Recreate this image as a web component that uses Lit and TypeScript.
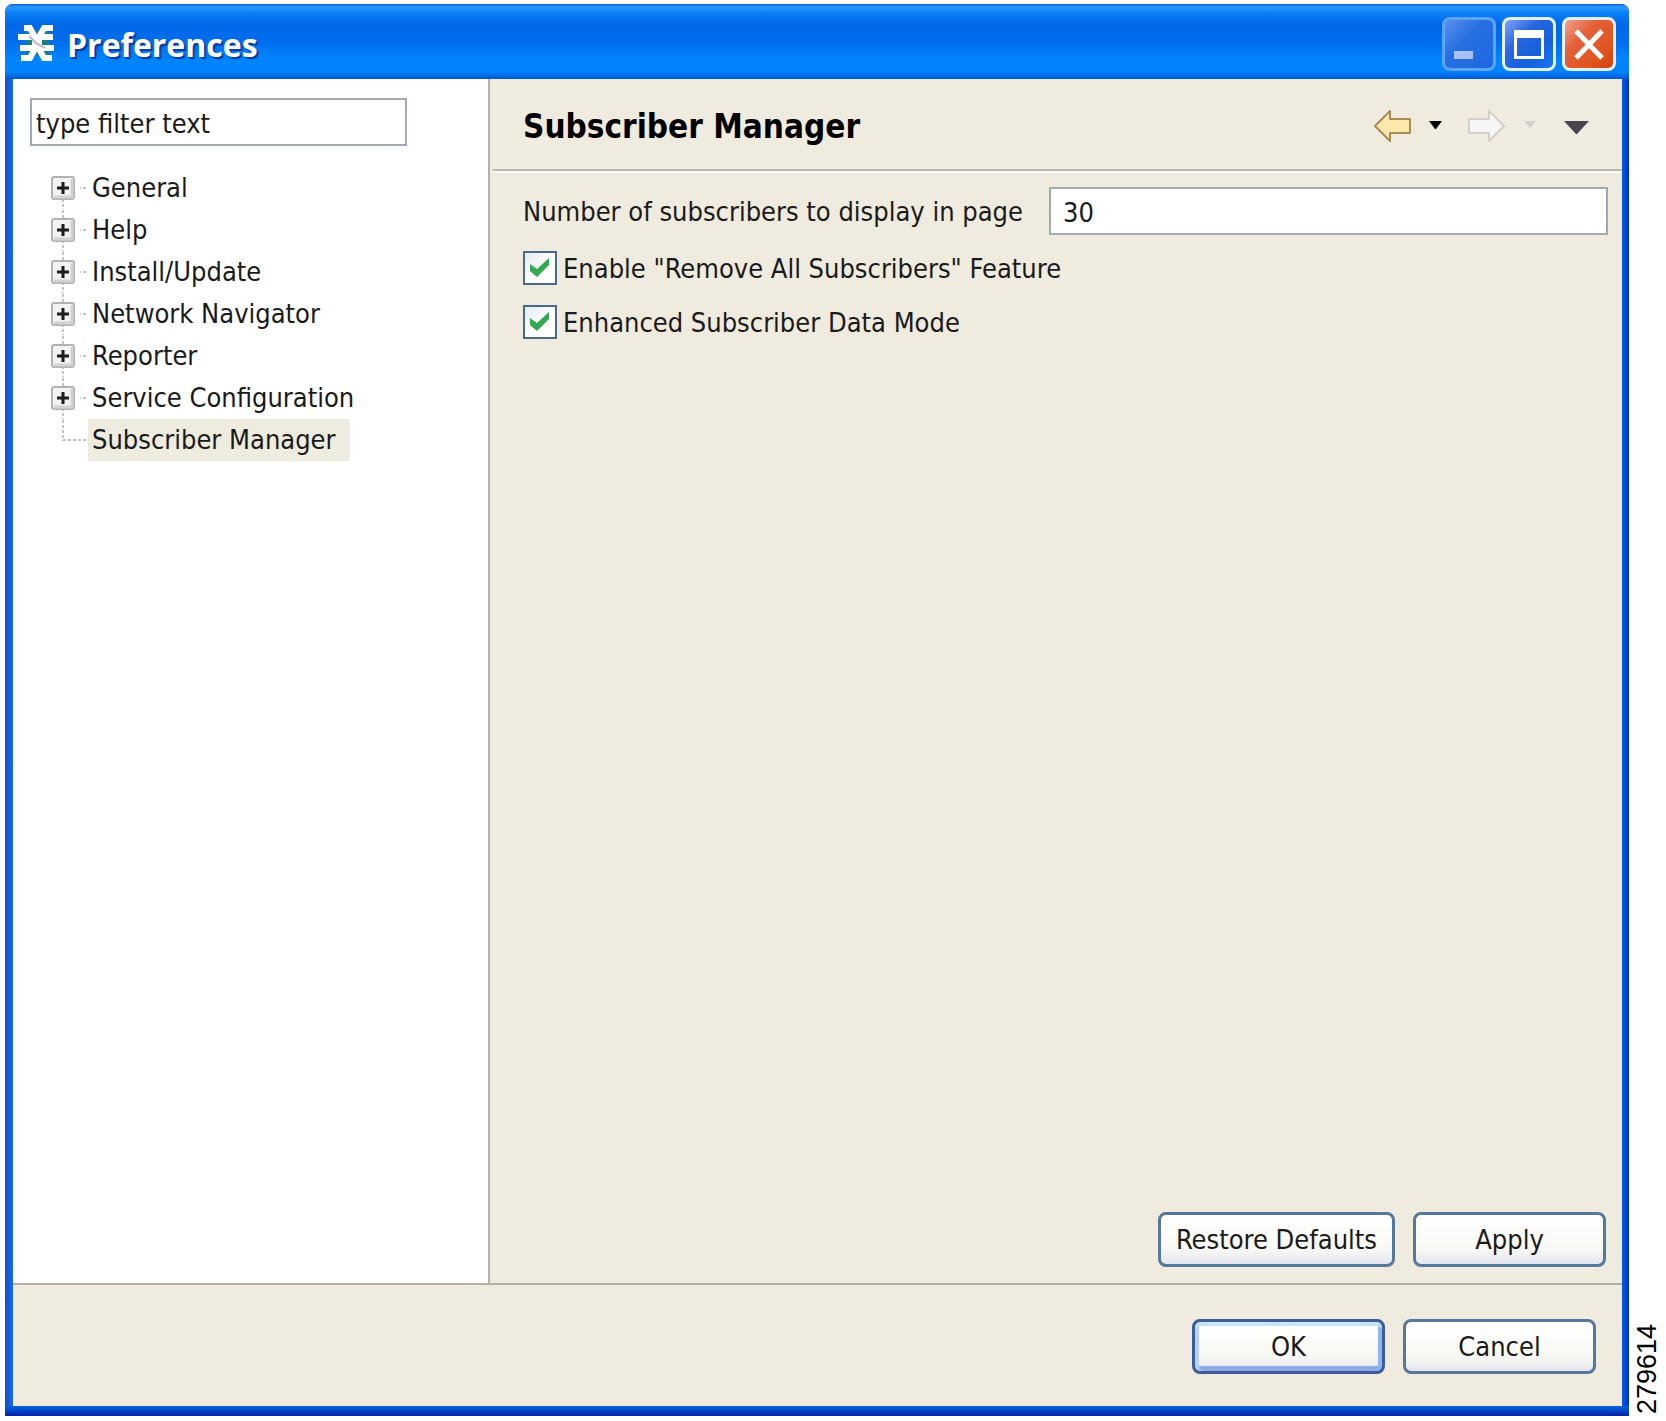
import { LitElement, html, css, svg, nothing } from "lit";
import { customElement, property, state } from "lit/decorators.js";
import { classMap } from "lit/directives/class-map.js";

interface TreeEntry {
  label: string;
  expandable: boolean;
}

const ENTRIES: TreeEntry[] = [
  { label: "General", expandable: true },
  { label: "Help", expandable: true },
  { label: "Install/Update", expandable: true },
  { label: "Network Navigator", expandable: true },
  { label: "Reporter", expandable: true },
  { label: "Service Configuration", expandable: true },
  { label: "Subscriber Manager", expandable: false },
];

const controlReset = css`
  * {
    box-sizing: border-box;
  }
  button,
  input {
    font: inherit;
    color: inherit;
    margin: 0;
  }
  svg {
    display: block;
  }
`;

@customElement("title-bar")
export class TitleBar extends LitElement {
  static styles = [
    controlReset,
    css`
      :host {
        display: flex;
        box-sizing: border-box;
        align-items: center;
        height: 75px;
        padding: 4px 13px 0;
        border-radius: 8px 8px 0 0;
        background: linear-gradient(
          #0a5fd8 0,
          #2a9bff 3px,
          #0a80f8 9px,
          #0068e8 20px,
          #006cec 36px,
          #0084ff 56px,
          #0082fc 68px,
          #0058d4 75px
        );
        color: #fff;
      }
      .name {
        flex: 1;
        margin: 0 0 0 12px;
        padding-top: 2px;
        font: bold 32px/40px "Open Sans", "Noto Sans", sans-serif;
        text-shadow: 2px 2px 1px #0a3a9c;
      }
      .buttons {
        display: flex;
        gap: 6px;
      }
      .box {
        width: 54px;
        height: 54px;
        padding: 0;
        display: grid;
        place-items: center;
        border: 3px solid #e4f0ff;
        border-radius: 8px;
        background: linear-gradient(135deg, #7ea6f4 0, #2a66e0 35%, #1460dc 70%, #1c78f4 100%);
      }
      .minimize {
        border-color: #5ca4f8;
        background: linear-gradient(135deg, #5c90ee 0, #2870e0 40%, #1c68e4 100%);
      }
      .close {
        background: linear-gradient(135deg, #f0a48c 0, #e4603a 35%, #e0541c 75%, #cc4410 100%);
      }
    `,
  ];

  render() {
    return html`
      <svg width="37" height="37" viewBox="0 0 37 37" fill="none" aria-hidden="true">
        <path d="M7 6H31V31H7Z" fill="#1c7c8c" />
        <path
          d="M6 3H12L17 12V24L12 33H3M35 3H26L21 12V24L26 33H34M0 12H17M2 23H17M21 12H35M21 23H36"
          stroke="#fff"
          stroke-width="6"
        />
        <path d="M11 11L18 18L27 23" stroke="#b8b4b8" stroke-width="2" />
      </svg>
      <h1 class="name">Preferences</h1>
      <div class="buttons">
        <button class="box minimize" type="button" aria-label="Minimize">
          <svg width="48" height="48" viewBox="0 0 48 48"><path d="M9 31h19v8H9z" fill="#a8c0f4" /></svg>
        </button>
        <button class="box maximize" type="button" aria-label="Maximize">
          <svg width="48" height="48" viewBox="0 0 48 48">
            <path d="M9 10h30v29H9zM12 18v18h24V18z" fill="#fff" fill-rule="evenodd" />
          </svg>
        </button>
        <button class="box close" type="button" aria-label="Close">
          <svg width="48" height="48" viewBox="0 0 48 48">
            <path d="M11 11L37 38M37 11L11 38" stroke="#fff" stroke-width="5" />
          </svg>
        </button>
      </div>
    `;
  }
}

@customElement("preference-tree")
export class PreferenceTree extends LitElement {
  @property() selected = "";

  static styles = [
    controlReset,
    css`
      :host {
        display: block;
        padding: 19px 17px;
        background: #fff;
        border-right: 2px solid #b4b2aa;
      }
      .filter {
        display: block;
        width: 377px;
        max-width: 100%;
        height: 48px;
        padding: 2px 4px 0;
        border: 2px solid #a3a9b1;
        background: #fff;
        outline: none;
      }
      .tree {
        list-style: none;
        margin: 21px 0 0;
        padding: 0 0 0 21px;
      }
      .row {
        display: flex;
        align-items: center;
        height: 42px;
      }
      .item {
        height: 42px;
        padding: 0 14px 0 4px;
        border: 0;
        background: none;
        white-space: nowrap;
        line-height: 42px;
      }
      .picked {
        background: #eeecdf;
      }
    `,
  ];

  private branch(entry: TreeEntry, first: boolean) {
    return html`<svg width="37" height="42" viewBox="0 0 37 42" fill="none" aria-hidden="true">
      <path
        d="${first ? "M12 22" : "M12 1"}V${entry.expandable ? 42 : 22}"
        stroke="#c4c4c4"
        stroke-width="2"
        stroke-dasharray="3 2"
      />
      <path d="M12 21H35" stroke="#c4c4c4" stroke-width="2" stroke-dasharray="3 2" />
      ${entry.expandable
        ? svg`<path d="M24 10H29V32H24Z" fill="#fff" />
            <rect x="1" y="10" width="22" height="22" rx="2" fill="#f3f3f1" stroke="#b0b3b5" stroke-width="2" />
            <path d="M3 30H21V12" stroke="#d2d3d1" stroke-width="3" />
            <path d="M6 21H18M12 15V27" stroke="#1c1c1c" stroke-width="3" />`
        : nothing}
    </svg>`;
  }

  private pick(label: string) {
    this.dispatchEvent(new CustomEvent("pick", { detail: label }));
  }

  render() {
    return html`
      <input class="filter" type="text" aria-label="Filter" value="type filter text" />
      <ul class="tree">
        ${ENTRIES.map(
          (entry, index) => html`<li class="row">
            ${this.branch(entry, index === 0)}
            <button
              type="button"
              class=${classMap({ item: true, picked: entry.label === this.selected })}
              @click=${() => this.pick(entry.label)}
            >
              ${entry.label}
            </button>
          </li>`,
        )}
      </ul>
    `;
  }
}

@customElement("preference-page")
export class PreferencePage extends LitElement {
  @property() heading = "";

  static styles = [
    controlReset,
    css`
      :host {
        display: flex;
        flex-direction: column;
        min-width: 0;
      }
      .head {
        display: flex;
        align-items: center;
        height: 92px;
        margin-left: 3px;
        padding: 4px 32px 0 30px;
        border-bottom: 2px solid #b9b7a9;
        box-shadow: 0 2px 0 #fbfaf4;
      }
      .title {
        flex: 1;
        margin: 0;
        padding-top: 2px;
        font: bold 33px/40px "DejaVu Sans Condensed", "DejaVu Sans", sans-serif;
        color: #000;
      }
      .nav {
        display: flex;
        align-items: center;
      }
      .tool {
        padding: 0;
        border: 0;
        background: none;
      }
      .form {
        flex: 1;
        display: flex;
        flex-direction: column;
        align-items: stretch;
        padding: 16px 14px 0 33px;
      }
      .field {
        display: flex;
        align-items: center;
        gap: 26px;
        margin-bottom: 16px;
      }
      .caption {
        padding-top: 2px;
      }
      .count {
        flex: 1;
        min-width: 0;
        height: 48px;
        padding: 2px 12px 0;
        border: 2px solid #a3a9b1;
        background: #fff;
        outline: none;
      }
      .option {
        display: flex;
        align-items: center;
        gap: 6px;
        height: 34px;
        margin-bottom: 20px;
      }
      .check {
        position: relative;
        display: grid;
        width: 34px;
        height: 34px;
      }
      .tick {
        appearance: none;
        width: 34px;
        height: 34px;
        border: 2px solid #4a6a8c;
        background: linear-gradient(135deg, #e6ebee, #fff 60%);
      }
      .mark {
        position: absolute;
        inset: 0;
        pointer-events: none;
      }
      .tick:not(:checked) + .mark {
        display: none;
      }
      .actions {
        display: flex;
        justify-content: flex-end;
        gap: 18px;
        padding: 0 16px 16px;
      }
    `,
  ];

  private option(id: string, label: string) {
    return html`<div class="option">
      <span class="check">
        <input class="tick" type="checkbox" id=${id} checked />
        <svg class="mark" width="34" height="34" viewBox="0 0 34 34" aria-hidden="true">
          <path d="M7 13L14 18L26 7V14L14 26L7 20Z" fill="#34a853" />
        </svg>
      </span>
      <label class="caption" for=${id}>${label}</label>
    </div>`;
  }

  render() {
    return html`
      <header class="head">
        <h2 class="title">${this.heading}</h2>
        <div class="nav">
          <button class="tool" type="button" aria-label="Back">
            <svg width="54" height="34" viewBox="0 0 54 34">
              <path
                d="M1 17L16 2V10H36V24H16V32Z"
                fill="#ffe8ac"
                stroke="#a88c58"
                stroke-width="2"
                stroke-linejoin="round"
              />
            </svg>
          </button>
          <button class="tool" type="button" aria-label="Back history">
            <svg width="40" height="34" viewBox="0 0 40 34"><path d="M1 12H14L8 20H7Z" fill="#000" /></svg>
          </button>
          <button class="tool" type="button" aria-label="Forward">
            <svg width="54" height="34" viewBox="0 0 54 34">
              <path
                d="M36 17L21 2V10H1V24H21V32Z"
                fill="#f7f6f4"
                stroke="#d2d0ca"
                stroke-width="2"
                stroke-linejoin="round"
              />
            </svg>
          </button>
          <button class="tool" type="button" aria-label="Forward history">
            <svg width="41" height="34" viewBox="0 0 41 34"><path d="M2 12H14L8 19Z" fill="#d4d2c8" /></svg>
          </button>
          <button class="tool" type="button" aria-label="Menu">
            <svg width="27" height="34" viewBox="0 0 27 34"><path d="M1 12H26L14 25H13Z" fill="#48444f" /></svg>
          </button>
        </div>
      </header>
      <div class="form">
        <div class="field">
          <label class="caption" for="count">Number of subscribers to display in page</label>
          <input class="count" id="count" type="text" value="30" />
        </div>
        ${this.option("remove-all", 'Enable "Remove All Subscribers" Feature')}
        ${this.option("enhanced", "Enhanced Subscriber Data Mode")}
      </div>
      <div class="actions">
        <push-button label="Restore Defaults"></push-button>
        <push-button label="Apply"></push-button>
      </div>
    `;
  }
}

@customElement("push-button")
export class PushButton extends LitElement {
  @property() label = "";
  @property({ type: Boolean }) primary = false;

  static styles = [
    controlReset,
    css`
      .push {
        min-width: 193px;
        height: 55px;
        padding: 1px 15px 0;
        border: 3px solid #56789a;
        border-radius: 8px;
        background: linear-gradient(#fff, #f8f8f4 70%, #e4e6ee);
        white-space: nowrap;
      }
      .primary {
        border-color: #3c5e98;
        box-shadow: inset 0 4px 1px #c8e2fc, inset 4px 0 1px #b4d0f6, inset -4px 0 1px #8cb4ee,
          inset 0 -5px 1px #8ea8e8;
      }
    `,
  ];

  render() {
    return html`<button type="button" class=${classMap({ push: true, primary: this.primary })}>
      ${this.label}
    </button>`;
  }
}

@customElement("app-root")
export class AppRoot extends LitElement {
  @state() private selected = "Subscriber Manager";

  static styles = [
    controlReset,
    css`
      :host {
        display: flex;
        box-sizing: border-box;
        min-height: 100vh;
        padding: 4px 0 5px 5px;
        background: #fff;
        color: #1a1a1a;
        font: 27px/40px "DejaVu Sans Condensed", "DejaVu Sans", sans-serif;
      }
      .window {
        flex: 1;
        min-width: 0;
        display: flex;
        flex-direction: column;
        border-radius: 8px 8px 0 0;
        background: linear-gradient(
          90deg,
          #0a4fd0 0,
          #1c6ce0 8px,
          #0858e0 50%,
          #0058e4 calc(100% - 6px),
          #0030bc 100%
        );
      }
      .client {
        flex: 1;
        display: flex;
        flex-direction: column;
        margin: 0 7px 0 8px;
        background: #f0ebdf;
      }
      .columns {
        flex: 1;
        display: grid;
        grid-template-columns: 477px 1fr;
      }
      .footer {
        display: flex;
        justify-content: flex-end;
        gap: 18px;
        padding: 34px 26px 32px;
        border-top: 2px solid #b4b1a4;
      }
      .edge {
        height: 10px;
        background: linear-gradient(#0a62d8, #0044c4 50%, #0020a8);
      }
      .serial {
        width: 37px;
        padding: 2px 5px 0;
        writing-mode: vertical-rl;
        transform: rotate(180deg);
        font: 27px/27px "Liberation Sans", Arial, sans-serif;
        color: #000;
      }
    `,
  ];

  render() {
    return html`
      <main class="window">
        <title-bar></title-bar>
        <div class="client">
          <div class="columns">
            <preference-tree
              .selected=${this.selected}
              @pick=${(event: CustomEvent<string>) => (this.selected = event.detail)}
            ></preference-tree>
            <preference-page .heading=${this.selected}></preference-page>
          </div>
          <footer class="footer">
            <push-button label="OK" primary></push-button>
            <push-button label="Cancel"></push-button>
          </footer>
        </div>
        <div class="edge"></div>
      </main>
      <aside class="serial">279614</aside>
    `;
  }
}
